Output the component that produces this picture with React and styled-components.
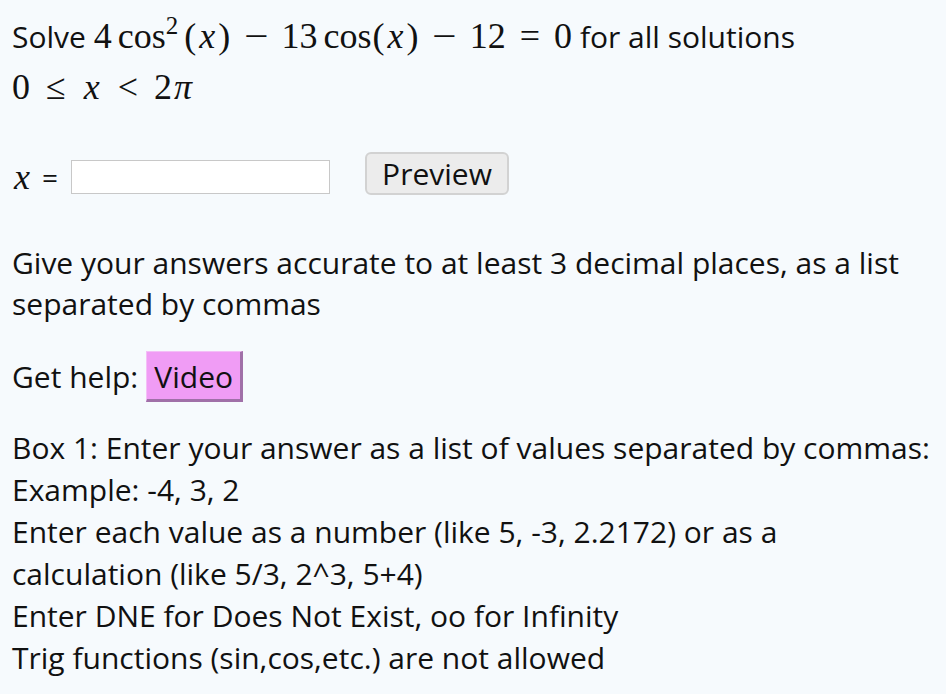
import React from "react";
import styled, { createGlobalStyle } from "styled-components";

const Global = createGlobalStyle`
  html, body { margin: 0; padding: 0; background: #f6fafd; }
  body { font-family: "Open Sans", "DejaVu Sans", sans-serif; color: #111; }
`;

const Page = styled.div`
  padding: 15px 12px 0;
  font-size: 30px;
`;

const Line = styled.div`
  display: flex;
  align-items: baseline;
  white-space: pre;
  height: ${p => p.$h}px;
  margin-top: ${p => p.$mt || 0}px;
`;

const Para = styled.p`
  margin: ${p => p.$mt || 0}px 0 0 0;
  font-size: 30px;
  line-height: ${p => p.$lh || 41}px;
`;

const M = styled.span`
  font-family: "Liberation Serif", "DejaVu Serif", serif;
  font-size: 36px;
  font-style: normal;
  margin-left: ${p => p.$ml || 0}px;
`;

const Var = styled.span`
  font-family: "Liberation Serif", "DejaVu Serif", serif;
  font-size: 36px;
  font-style: italic;
  padding: 0 2px;
`;

const Paren = styled.span`
  font-family: "Liberation Serif", "DejaVu Serif", serif;
  font-size: 36px;
  padding: 0 1px;
`;

const Op = styled.span`
  display: inline-block;
  font-family: "Liberation Serif", "DejaVu Serif", serif;
  font-size: 36px;
  margin: 0 ${p => p.$pad ?? 16}px;
  transform: scaleX(${p => p.$sx || 1});
`;

const Sup = styled.span`
  font-family: "Liberation Serif", "DejaVu Serif", serif;
  font-size: 25px;
  position: relative;
  top: -14px;
  margin-right: 5px;
`;

const Row = styled.div`
  display: flex;
  align-items: flex-start;
  margin-top: ${p => p.$mt || 0}px;
`;

const CenterRow = styled.div`
  display: flex;
  align-items: center;
  margin-top: ${p => p.$mt || 0}px;
`;

const Field = styled.div`
  display: flex;
  align-items: center;
  height: 34px;
  margin-top: 8px;
`;

const Label = styled.span`
  font-size: 28px;
  margin: 0 13px 0 10px;
`;

const Input = styled.input`
  box-sizing: border-box;
  width: 259px;
  height: 34px;
  border: 1px solid #c8c8c8;
  background: #fff;
  margin: 0;
`;

const Button = styled.button`
  box-sizing: border-box;
  margin-left: 35px;
  width: 144px;
  height: 43px;
  font-family: "Open Sans", sans-serif;
  font-size: 30px;
  line-height: 35px;
  padding: 0;
  border: 2px solid #d2d2d2;
  border-radius: 6px;
  background: #ececec;
  color: #111;
`;

const VideoBtn = styled.span`
  box-sizing: border-box;
  display: inline-flex;
  align-items: center;
  justify-content: center;
  margin-left: 8px;
  width: 97px;
  height: 51px;
  background: #f09cf5;
  border-right: 3px solid #a070a8;
  border-bottom: 3px solid #a070a8;
  border-top: 1px solid #f4bff7;
  border-left: 1px solid #f4bff7;
  padding-top: 2px;
`;

export default function App() {
  return (
    <>
      <Global />
      <Page>
        <Line $h={44}>
          <span>Solve </span>
          <M>4</M>
          <M $ml={6}>cos</M>
          <Sup>2</Sup>
          <Paren>(</Paren>
          <Var>x</Var>
          <Paren>)</Paren>
          <Op $pad={15} $sx={1.2}>−</Op>
          <M>13</M>
          <M $ml={6}>cos</M>
          <Paren>(</Paren>
          <Var>x</Var>
          <Paren>)</Paren>
          <Op $pad={15} $sx={1.2}>−</Op>
          <M>12</M>
          <Op $pad={14}>=</Op>
          <M>0</M>
          <span> for all solutions</span>
        </Line>
        <Line $h={40} $mt={7}>
          <M>0</M>
          <Op>≤</Op>
          <Var>x</Var>
          <Op>&lt;</Op>
          <M>2</M>
          <Var>π</Var>
        </Line>
        <Row $mt={46}>
          <Field>
            <Var>x</Var>
            <Label>=</Label>
            <Input />
          </Field>
          <Button>Preview</Button>
        </Row>
        <Para $mt={47}>
          Give your answers accurate to at least 3 decimal places, as a list separated by commas
        </Para>
        <CenterRow $mt={27}>
          <span>Get help:</span>
          <VideoBtn>Video</VideoBtn>
        </CenterRow>
        <Para $mt={25} $lh={42}>
          Box 1: Enter your answer as a list of values separated by commas:
          <br />
          Example: -4, 3, 2
          <br />
          Enter each value as a number (like 5, -3, 2.2172) or as a calculation (like 5/3, 2^3, 5+4)
          <br />
          Enter DNE for Does Not Exist, oo for Infinity
          <br />
          Trig functions (sin,cos,etc.) are not allowed
        </Para>
      </Page>
    </>
  );
}
